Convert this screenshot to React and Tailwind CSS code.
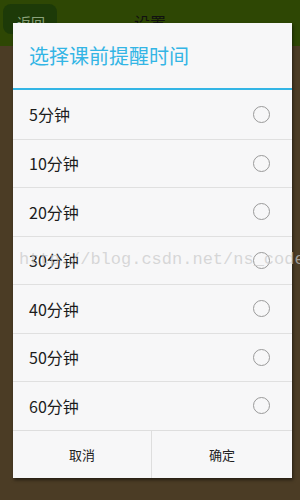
import React from 'react';

const options = ['5分钟', '10分钟', '20分钟', '30分钟', '40分钟', '50分钟', '60分钟'];

const Radio = () => (
    <span className="w-[17px] h-[17px] rounded-full border-[1.5px] border-[#9a9a9a] shrink-0" />
);

const App = () => {
    return (
        <div
            className="relative w-[300px] h-[500px] overflow-hidden bg-[#4a3b24] flex flex-col"
            style={{ fontFamily: '"Noto Sans CJK SC", "Noto Sans", sans-serif' }}
        >
            {/* app behind the dialog */}
            <div className="h-[46px] bg-[#2e4704] grid grid-cols-[1fr_auto_1fr] items-start pt-[4px] px-[3px] shrink-0">
                <span className="justify-self-start bg-[#1d3a08] rounded-[8px] pl-[14px] pr-[12px] pt-[8px] h-[30px] text-[14px] text-[#8aa27a]">返回</span>
                <span className="pt-[6px] text-[16px] text-[#111]">设置</span>
                <span />
            </div>
            <div className="flex-1 bg-[#4b3c25]" />

            {/* dialog */}
            <div className="absolute left-[13px] top-[23px] w-[279px] h-[455px] bg-[#f7f7f8] flex flex-col shadow-[1px_2px_3px_rgba(0,0,0,0.5)]">
                <div className="h-[65px] flex items-center px-[16px] text-[20px] text-[#33b5e5]">选择课前提醒时间</div>
                <div className="h-[2px] bg-[#33b5e5]" />
                <div className="flex flex-col">
                    {options.map((label, i) => (
                        <div
                            key={label}
                            className={`h-[48.5px] flex items-center justify-between pl-[16px] pr-[22px] text-[16px] text-[#1c1c1c] ${i > 0 ? 'border-t border-[#e0e0e0]' : ''}`}
                        >
                            <span>{label}</span>
                            <Radio />
                        </div>
                    ))}
                </div>
                <div className="flex-1 flex border-t border-[#dedede] text-[13px] text-[#222]">
                    <div className="w-[139px] flex items-center justify-center border-r border-[#dedede]">取消</div>
                    <div className="flex-1 flex items-center justify-center">确定</div>
                </div>
            </div>

            {/* watermark */}
            <div
                className="absolute left-[19px] top-[247px] text-[17px] text-[#c8c8c8]/70 whitespace-nowrap pointer-events-none"
                style={{ fontFamily: '"Liberation Mono", monospace' }}
            >
                http://blog.csdn.net/ns_code
            </div>
        </div>
    );
};

export default App;
